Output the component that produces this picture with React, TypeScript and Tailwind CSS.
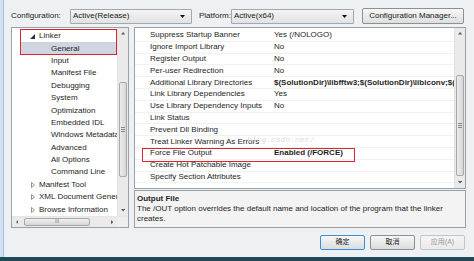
import React from "react";

const font = { fontFamily: '"Liberation Sans", "Noto Sans CJK SC", sans-serif' };

const treeRows: { label: string; level: 0 | 1; mark?: "open" | "closed"; selected?: boolean }[] = [
  { label: "Linker", level: 0, mark: "open" },
  { label: "General", level: 1, selected: true },
  { label: "Input", level: 1 },
  { label: "Manifest File", level: 1 },
  { label: "Debugging", level: 1 },
  { label: "System", level: 1 },
  { label: "Optimization", level: 1 },
  { label: "Embedded IDL", level: 1 },
  { label: "Windows Metadata", level: 1 },
  { label: "Advanced", level: 1 },
  { label: "All Options", level: 1 },
  { label: "Command Line", level: 1 },
  { label: "Manifest Tool", level: 0, mark: "closed" },
  { label: "XML Document Generator", level: 0, mark: "closed" },
  { label: "Browse Information", level: 0, mark: "closed" },
];

const props: { name: string; value?: string; bold?: boolean }[] = [
  { name: "Suppress Startup Banner", value: "Yes (/NOLOGO)" },
  { name: "Ignore Import Library", value: "No" },
  { name: "Register Output", value: "No" },
  { name: "Per-user Redirection", value: "No" },
  { name: "Additional Library Directories", value: "$(SolutionDir)\\libfftw3;$(SolutionDir)\\libiconv;$(SolutionDir)", bold: true },
  { name: "Link Library Dependencies", value: "Yes" },
  { name: "Use Library Dependency Inputs", value: "No" },
  { name: "Link Status" },
  { name: "Prevent Dll Binding" },
  { name: "Treat Linker Warning As Errors" },
  { name: "Force File Output", value: "Enabled (/FORCE)", bold: true },
  { name: "Create Hot Patchable Image" },
  { name: "Specify Section Attributes" },
];

function Arrow({ dir }: { dir: "up" | "down" | "left" | "right" }) {
  const pts = {
    up: "0,4 3.5,0 7,4",
    down: "0,0 3.5,4 7,0",
    left: "4,0 0,3.5 4,7",
    right: "0,0 4,3.5 0,7",
  }[dir];
  const w = dir === "up" || dir === "down" ? 7 : 4;
  const h = dir === "up" || dir === "down" ? 4 : 7;
  return (
    <svg width={w * 0.6} height={h * 0.6} viewBox={`0 0 ${w} ${h}`}>
      <polygon points={pts} fill="#5a5a5a" />
    </svg>
  );
}

function Select({ text, width }: { text: string; width: string }) {
  return (
    <div
      className={`${width} shrink-0 h-[15px] flex items-center justify-between border border-[#9fa8b3] bg-gradient-to-b from-[#f4f4f4] to-[#e2e2e2] pl-[2px] pr-[6px] text-[8px] text-[#1a1a1a] rounded-[1px]`}
    >
      <span>{text}</span>
      <svg width="5" height="3" viewBox="0 0 5 3">
        <polygon points="0,0 5,0 2.5,3" fill="#111" />
      </svg>
    </div>
  );
}

function VScroll({ thumbTop, thumbHeight }: { thumbTop: number; thumbHeight: number }) {
  return (
    <div className="w-[11px] shrink-0 h-full bg-[#eaeaea] border-l border-[#e2e2e2] flex flex-col relative">
      <div className="h-[11px] flex items-center justify-center">
        <Arrow dir="up" />
      </div>
      <div className="flex-1" />
      <div className="h-[11px] flex items-center justify-center">
        <Arrow dir="down" />
      </div>
      <div
        className="absolute left-[1px] right-[1px] rounded-[2px] border border-[#a8a8a8] bg-gradient-to-r from-[#ececec] to-[#d8d8d8] flex items-center justify-center"
        style={{ top: thumbTop, height: thumbHeight }}
      >
        <div className="w-[4px] flex flex-col gap-[1px]">
          <div className="h-px bg-[#888]" />
          <div className="h-px bg-[#888]" />
          <div className="h-px bg-[#888]" />
        </div>
      </div>
    </div>
  );
}

function Button({ label, primary, disabled }: { label: string; primary?: boolean; disabled?: boolean }) {
  return (
    <div
      className={`w-[45px] h-[15px] shrink-0 flex items-center justify-center rounded-[2px] text-[7px] border bg-gradient-to-b ${
        primary ? "border-[#3c8fd6]" : disabled ? "border-[#c4c4c4]" : "border-[#8e8f8f]"
      } ${disabled ? "text-[#9a9a9a] from-[#f5f5f5] to-[#eaeaea]" : "text-[#222] from-[#f7f7f7] to-[#dcdcdc]"}`}
    >
      {label}
    </div>
  );
}

export default function App() {
  return (
    <div className="w-[474px] h-[261px] flex flex-col overflow-hidden bg-[#eef1f4]" style={font}>
      <div className="flex-1 flex min-h-0">
        <div className="w-[4px] shrink-0 bg-[#cfe0f1] border-r border-[#a7bed6]" />
        <div className="flex-1 min-w-0 flex flex-col pl-[7px] pr-[8px] pt-[8px]">
          {/* top row */}
          <div className="h-[16px] flex items-center text-[8px] text-[#1a1a1a]">
            <span className="w-[59px] shrink-0">Configuration:</span>
            <Select text="Active(Release)" width="w-[122px]" />
            <span className="ml-[7px] w-[32px] shrink-0">Platform:</span>
            <Select text="Active(x64)" width="w-[123px]" />
            <div className="ml-[8px] w-[102px] shrink-0 h-[16px] flex items-center justify-center border border-[#8e8f8f] rounded-[2px] bg-gradient-to-b from-[#f7f7f7] to-[#dedede]">
              Configuration Manager...
            </div>
          </div>

          <div className="flex mt-[3px] h-[201px]">
            {/* tree */}
            <div className="w-[118px] shrink-0 h-full border border-[#9aa0a8] bg-white flex flex-col relative">
              <div className="flex-1 flex min-h-0">
                <div className="flex-1 min-w-0 overflow-hidden pt-[2px] text-[8px] text-[#1e1e1e]">
                  {treeRows.map((r) => (
                    <div key={r.label} className="h-[12.4px] flex items-center whitespace-nowrap">
                      {r.level === 0 ? (
                        <>
                          <span className="w-[27px] shrink-0 flex justify-end pr-[4px]">
                            {r.mark === "open" ? (
                              <svg width="5" height="5" viewBox="0 0 5 5">
                                <polygon points="5,0 5,5 0,5" fill="#333" />
                              </svg>
                            ) : (
                              <svg width="4" height="6" viewBox="0 0 4 6">
                                <polygon points="0.5,0.5 3.5,3 0.5,5.5" fill="none" stroke="#777" strokeWidth="0.8" />
                              </svg>
                            )}
                          </span>
                          <span>{r.label}</span>
                        </>
                      ) : (
                        <div
                          className={`h-full shrink-0 flex items-center ml-[9px] pl-[30px] w-[95px] ${
                            r.selected ? "bg-[#cfd6e0]" : ""
                          }`}
                        >
                          {r.label}
                        </div>
                      )}
                    </div>
                  ))}
                </div>
                <VScroll thumbTop={54} thumbHeight={95} />
              </div>
              <div className="h-[11px] flex border-t border-[#e6e6e6] bg-[#eaeaea]">
                <div className="flex-1 flex items-center relative">
                  <div className="w-[10px] flex justify-center">
                    <Arrow dir="left" />
                  </div>
                  <div className="absolute left-[12px] w-[66px] top-[1px] bottom-[1px] rounded-[2px] border border-[#a8a8a8] bg-gradient-to-b from-[#f0f0f0] to-[#d6d6d6] flex items-center justify-center text-[5px] text-[#777]">
                    III
                  </div>
                  <div className="flex-1" />
                  <div className="w-[10px] flex justify-center">
                    <Arrow dir="right" />
                  </div>
                </div>
                <div className="w-[11px] bg-[#eeeeee]" />
              </div>
              {/* highlight box */}
              <div className="absolute left-[8px] top-[1px] w-[97px] h-[26px] border-[1.5px] border-[#e0242f]" />
            </div>

            {/* right side */}
            <div className="flex-1 min-w-0 ml-[5px] flex flex-col">
              <div className="h-[162px] border border-[#9aa0a8] bg-white flex relative overflow-hidden">
                <div className="flex-1 min-w-0 overflow-hidden pt-[2px] text-[8px] text-[#1e1e1e]">
                  {props.map((p) => (
                    <div key={p.name} className="h-[11.8px] flex items-center whitespace-nowrap border-b border-[#f1f1f1]">
                      <span className="w-[139px] pl-[15px] shrink-0">{p.name}</span>
                      <span className={p.bold ? "font-bold" : ""}>{p.value}</span>
                    </div>
                  ))}
                </div>
                <VScroll thumbTop={47} thumbHeight={101} />
                <div className="absolute left-[7px] top-[120px] w-[213px] h-[14px] border-[1.5px] border-[#e0242f]" />
                <div
                  className="absolute left-[112px] top-[106px] text-[8px] text-[#dcdcdc] italic"
                  style={{ fontFamily: '"Liberation Mono", monospace' }}
                >
                  blog.csdn.net/
                </div>
              </div>
              <div className="flex-1 mt-[1px] border border-[#9aa0a8] bg-[#f3f3f3] px-[2px] pt-[3px] text-[8px] text-[#1e1e1e] leading-[10px]">
                <div className="font-bold">Output File</div>
                <div>The /OUT option overrides the default name and location of the program that the linker creates.</div>
              </div>
            </div>
          </div>

          <div className="flex justify-end gap-[5px] mt-[7px] pr-[1px]">
            <Button label="确定" primary />
            <Button label="取消" />
            <Button label="应用(A)" disabled />
          </div>
        </div>
      </div>
      <div className="h-[4px] bg-[#1d4a57]" />
    </div>
  );
}
